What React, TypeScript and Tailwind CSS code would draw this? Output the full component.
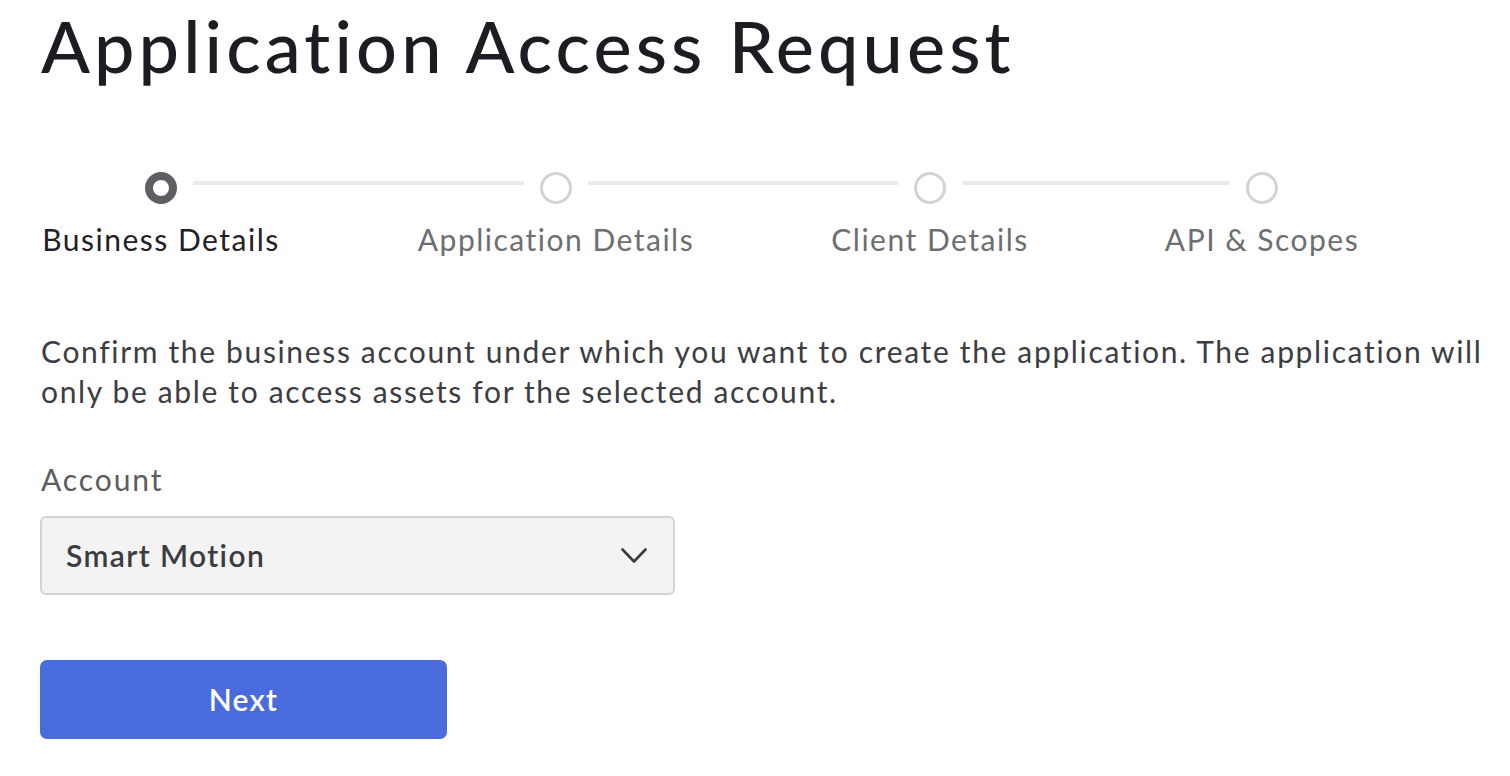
import React from "react";

const steps = [
  { label: "Business Details", col: "w-[240px]" },
  { label: "Application Details", col: "w-[550px]" },
  { label: "Client Details", col: "w-[198px]" },
  { label: "API & Scopes", col: "w-[466px]" },
];

const Stepper = ({ current = 0 }: { current?: number }) => {
  return (
    <div className="flex mt-[91px]">
      {steps.map((step, i) => {
        const active = i === current;
        return (
          <div key={step.label} className={`${step.col} flex flex-col items-center`}>
            <div className="flex items-start w-full">
              <div
                className={`flex-1 h-[4px] mt-[9px] mr-[16px] ${
                  i === 0 ? "bg-transparent" : "bg-[#ebebeb]"
                }`}
              />
              {active ? (
                <div className="w-[32px] h-[32px] rounded-full border-[8px] border-[#5e5f63] bg-white" />
              ) : (
                <div className="w-[32px] h-[32px] rounded-full border-[3px] border-[#d3d3d3] bg-white" />
              )}
              <div
                className={`flex-1 h-[4px] mt-[9px] ml-[16px] ${
                  i === steps.length - 1 ? "bg-transparent" : "bg-[#ebebeb]"
                }`}
              />
            </div>
            <span
              className={`mt-[15px] text-[30px] leading-[40px] tracking-[1.5px] whitespace-nowrap ${
                active ? "text-[#1f2125]" : "text-[#6d6e71]"
              }`}
            >
              {step.label}
            </span>
          </div>
        );
      })}
    </div>
  );
};

export default function App() {
  return (
    <div
      className="min-h-screen bg-white pl-[41px] pr-[10px]"
      style={{ fontFamily: "Lato, 'Open Sans', sans-serif" }}
    >
      <h1 className="pt-[9px] text-[72px] leading-none font-medium tracking-[4.1px] text-[#1b1d22]">
        Application Access Request
      </h1>

      <Stepper current={0} />

      {/* Description */}
      <p className="mt-[72px] text-[30px] leading-[40px] tracking-[1.65px] text-[#3c3d42]">
        Confirm the business account under which you want to create the application. The application will
        only be able to access assets for the selected account.
      </p>

      <label className="block mt-[48px] text-[30px] leading-[40px] tracking-[1.9px] text-[#5b5c60]">
        Account
      </label>

      <div className="mt-[17px] -ml-[1px] w-[635px] h-[79px] flex items-center justify-between pl-[24px] pr-[26px] bg-[#f3f3f3] border-2 border-[#d3d3d3] rounded-[6px]">
        <span className="text-[30px] font-semibold tracking-[1.4px] text-[#3b3c40]">Smart Motion</span>
        <svg width="26" height="16" viewBox="0 0 26 16" fill="none">
          <polyline
            points="1.5,1.5 13,13.5 24.5,1.5"
            stroke="#3b3c40"
            strokeWidth="2.6"
            strokeLinecap="round"
            strokeLinejoin="round"
          />
        </svg>
      </div>

      <button className="mt-[65px] -ml-[1px] w-[407px] h-[79px] flex items-center justify-center bg-[#4a6bdb] rounded-[7px] text-white text-[30px] font-semibold tracking-[1.2px]">
        Next
      </button>
    </div>
  );
}
